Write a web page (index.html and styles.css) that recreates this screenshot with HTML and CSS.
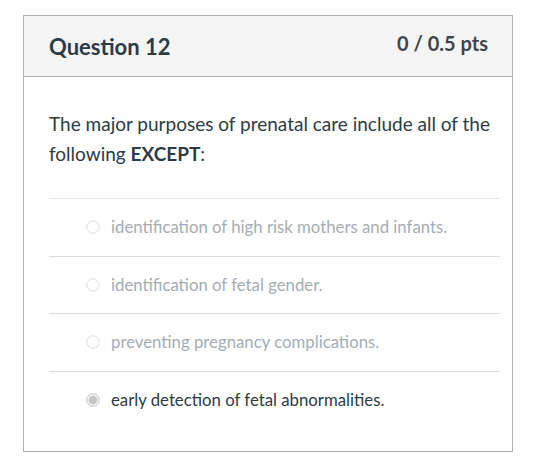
FILE: index.html
```html
<!DOCTYPE html>
<html>
<head>
<meta charset="utf-8">
<link rel="stylesheet" href="styles.css">
</head>
<body>
<div class="card">
  <div class="header">
    <h3 class="title">Question 12</h3>
    <div class="pts">0 / 0.5 pts</div>
  </div>
  <div class="content">
    <p class="question">The major purposes of prenatal care include all of the following <strong>EXCEPT</strong>:</p>
    <div class="answers">
      <div class="answer">
        <svg class="radio" width="14" height="14" viewBox="0 0 14 14"><circle cx="7" cy="7" r="6.2" fill="#fff" stroke="#dcdcdc" stroke-width="1"/></svg>
        <span class="label muted">identification of high risk mothers and infants.</span>
      </div>
      <div class="answer">
        <svg class="radio" width="14" height="14" viewBox="0 0 14 14"><circle cx="7" cy="7" r="6.2" fill="#fff" stroke="#dcdcdc" stroke-width="1"/></svg>
        <span class="label muted">identification of fetal gender.</span>
      </div>
      <div class="answer">
        <svg class="radio" width="14" height="14" viewBox="0 0 14 14"><circle cx="7" cy="7" r="6.2" fill="#fff" stroke="#dcdcdc" stroke-width="1"/></svg>
        <span class="label muted">preventing pregnancy complications.</span>
      </div>
      <div class="answer">
        <svg class="radio" width="14" height="14" viewBox="0 0 14 14"><circle cx="7" cy="7" r="6.2" fill="#f4f4f4" stroke="#c4c4c4" stroke-width="1"/><circle cx="7" cy="7" r="4.3" fill="#c6c6c6"/></svg>
        <span class="label">early detection of fetal abnormalities.</span>
      </div>
    </div>
  </div>
</div>
</body>
</html>
```
FILE: styles.css
```css
html, body {
  margin: 0;
  padding: 0;
  background: #fff;
}
body {
  font-family: Lato, "Open Sans", "Liberation Sans", sans-serif;
  color: #2d3b45;
}
.card {
  margin: 15px 0 0 23px;
  width: 488px;
  height: 435px;
  border: 1px solid #aeaeae;
  box-sizing: content-box;
}
.header {
  height: 60px;
  background: #f5f5f5;
  border-bottom: 1px solid #aeaeae;
  display: flex;
  justify-content: space-between;
  padding: 0 24px 0 25px;
}
.title {
  margin: 0;
  font-size: 22px;
  font-weight: 700;
  line-height: 26px;
  padding-top: 18px;
}
.pts {
  font-size: 20px;
  font-weight: 700;
  color: #3d464d;
  line-height: 24px;
  padding-top: 15px;
}
.content {
  padding: 32px 12px 0 25px;
}
.question {
  margin: 0;
  font-size: 19px;
  line-height: 30px;
  padding-bottom: 29px;
  border-bottom: 1px solid #e6e6e6;
}
.question strong {
  font-weight: 700;
}
.answer {
  display: flex;
  align-items: center;
  height: 56.5px;
  padding-left: 37px;
  gap: 11px;
  border-bottom: 1px solid #dcdcdc;
}
.answer:last-child {
  border-bottom: none;
}
.radio {
  flex: none;
}
.label {
  font-size: 16.75px;
  line-height: 20px;
}
.muted {
  color: #a5adb3;
}
```
